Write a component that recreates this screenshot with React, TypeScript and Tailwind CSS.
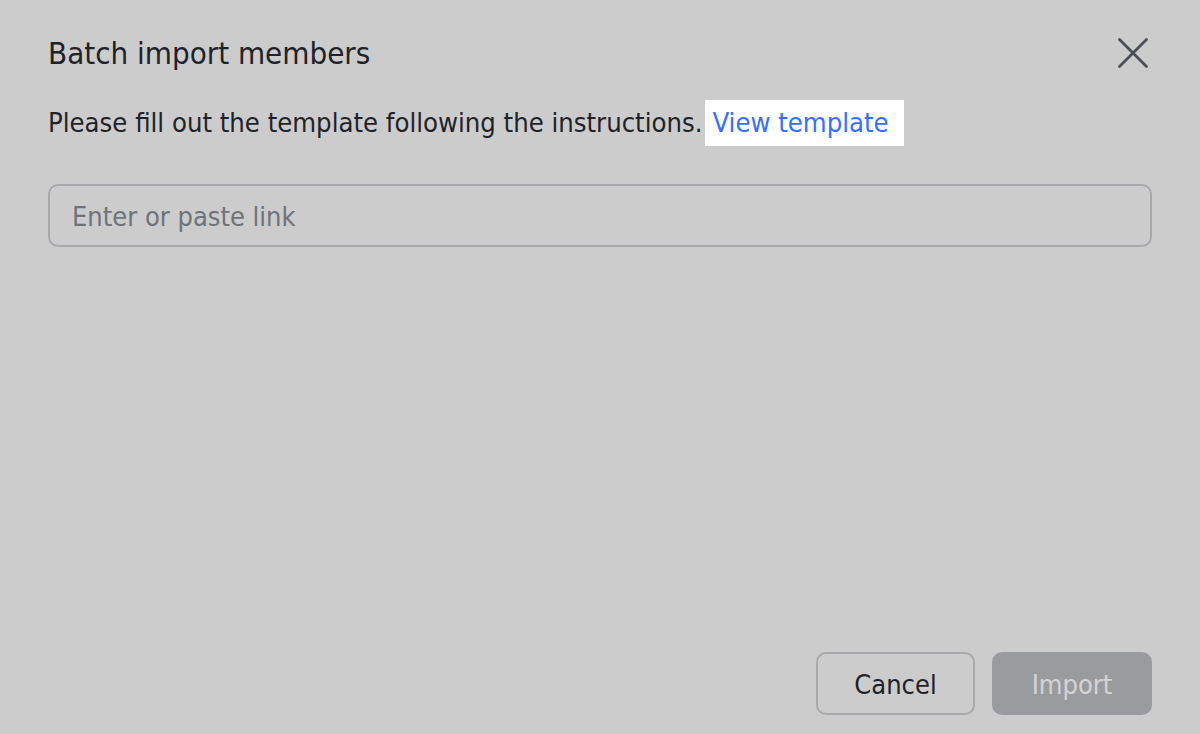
import React from "react";

const F = '"DejaVu Sans Condensed", "DejaVu Sans", sans-serif';

export default function App() {
  return (
    <div
      className="w-[1200px] h-[734px] bg-[#cccccc] flex flex-col px-12 pb-[19px] overflow-hidden"
      style={{ fontFamily: F }}
    >
      <div className="flex items-center justify-between h-[46px] mt-[30px]">
        <h1 className="text-[31px] leading-[46px] text-[#1f2329]">Batch import members</h1>
        <button className="w-[30px] h-[30px] mr-[4px] flex items-center justify-center">
          <svg width="30" height="30" viewBox="0 0 30 30" fill="none">
            <path d="M1.5 1.5L28.5 28.5M28.5 1.5L1.5 28.5" stroke="#4b4f55" strokeWidth="2.8" strokeLinecap="round" />
          </svg>
        </button>
      </div>
      <div className="mt-[24px] h-[46px] flex items-center text-[27.2px] text-[#1f2329]">
        <span>Please fill out the template following the instructions.</span>
        <span className="ml-[3px] h-[46px] bg-white pl-[7px] pr-[15px] flex items-center text-[#3370ff]">View template</span>
      </div>
      <div className="mt-[38px] h-[63px] border-2 border-[#a7a9ad] rounded-[10px] flex items-center px-[22px] pt-[3px]">
        <input
          className="w-full bg-transparent outline-none text-[27px] text-[#1f2329] placeholder:text-[#6f7379]"
          placeholder="Enter or paste link"
          style={{ fontFamily: F }}
        />
      </div>
      <div className="mt-auto flex justify-end gap-[17px]">
        <button className="w-[159px] h-[63px] pt-[3px] border-2 border-[#a7a9ad] rounded-[10px] text-[27px] text-[#1f2329]">
          Cancel
        </button>
        <button className="w-[160px] h-[63px] pt-[3px] bg-[#9a9b9e] rounded-[10px] text-[27px] text-[#d4d4d4]">
          Import
        </button>
      </div>
    </div>
  );
}
